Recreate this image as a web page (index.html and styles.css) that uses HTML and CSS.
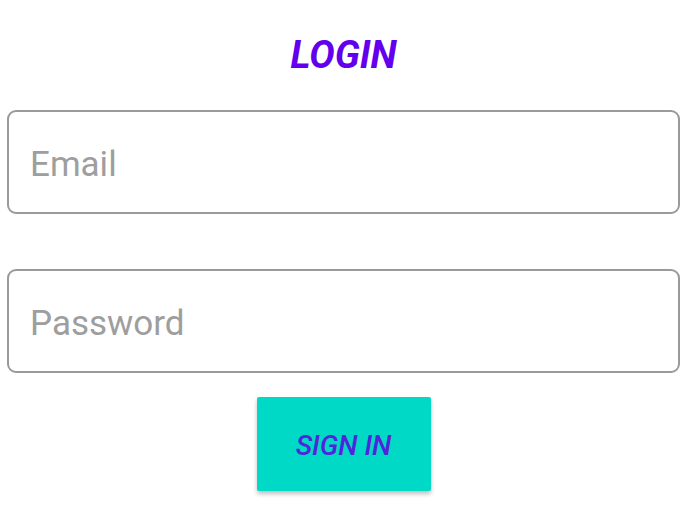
FILE: index.html
```html
<!DOCTYPE html>
<html>
<head>
<meta charset="utf-8">
<link rel="stylesheet" href="styles.css">
</head>
<body>
<main class="login">
  <h1 class="title">LOGIN</h1>
  <div class="field"><input class="input" type="text" placeholder="Email"></div>
  <div class="field field-gap"><input class="input" type="password" placeholder="Password"></div>
  <button class="btn">SIGN IN</button>
</main>
</body>
</html>
```
FILE: styles.css
```css
* { box-sizing: border-box; }
html, body { margin: 0; padding: 0; background: #fff; }
body { font-family: Roboto, "Noto Sans", sans-serif; width: 696px; height: 505px; overflow: hidden; }
.login { display: flex; flex-direction: column; align-items: center; padding: 34px 16px 0 7px; }
.title { margin: 0; font-size: 38px; font-weight: 700; font-style: italic; color: #6200ee; line-height: 42px; height: 42px; }
.field { width: 673px; margin-top: 34px; }
.field-gap { margin-top: 55px; }
.input { display: block; width: 100%; height: 104px; border: 2px solid #9a9a9a; border-radius: 9px; padding: 4px 0 0 21px; font-family: Roboto, sans-serif; font-size: 35px; color: #333; outline: none; background: #fff; }
.input::placeholder { color: #9e9e9e; }
.btn { margin-top: 24px; width: 174px; height: 94px; padding: 3px 0 0; border: none; border-radius: 2px; background: #00d9c5; color: #5024db; font-family: Roboto, sans-serif; font-size: 28px; font-weight: 500; font-style: italic; box-shadow: 0 3px 4px rgba(0,0,0,0.25); }
```
